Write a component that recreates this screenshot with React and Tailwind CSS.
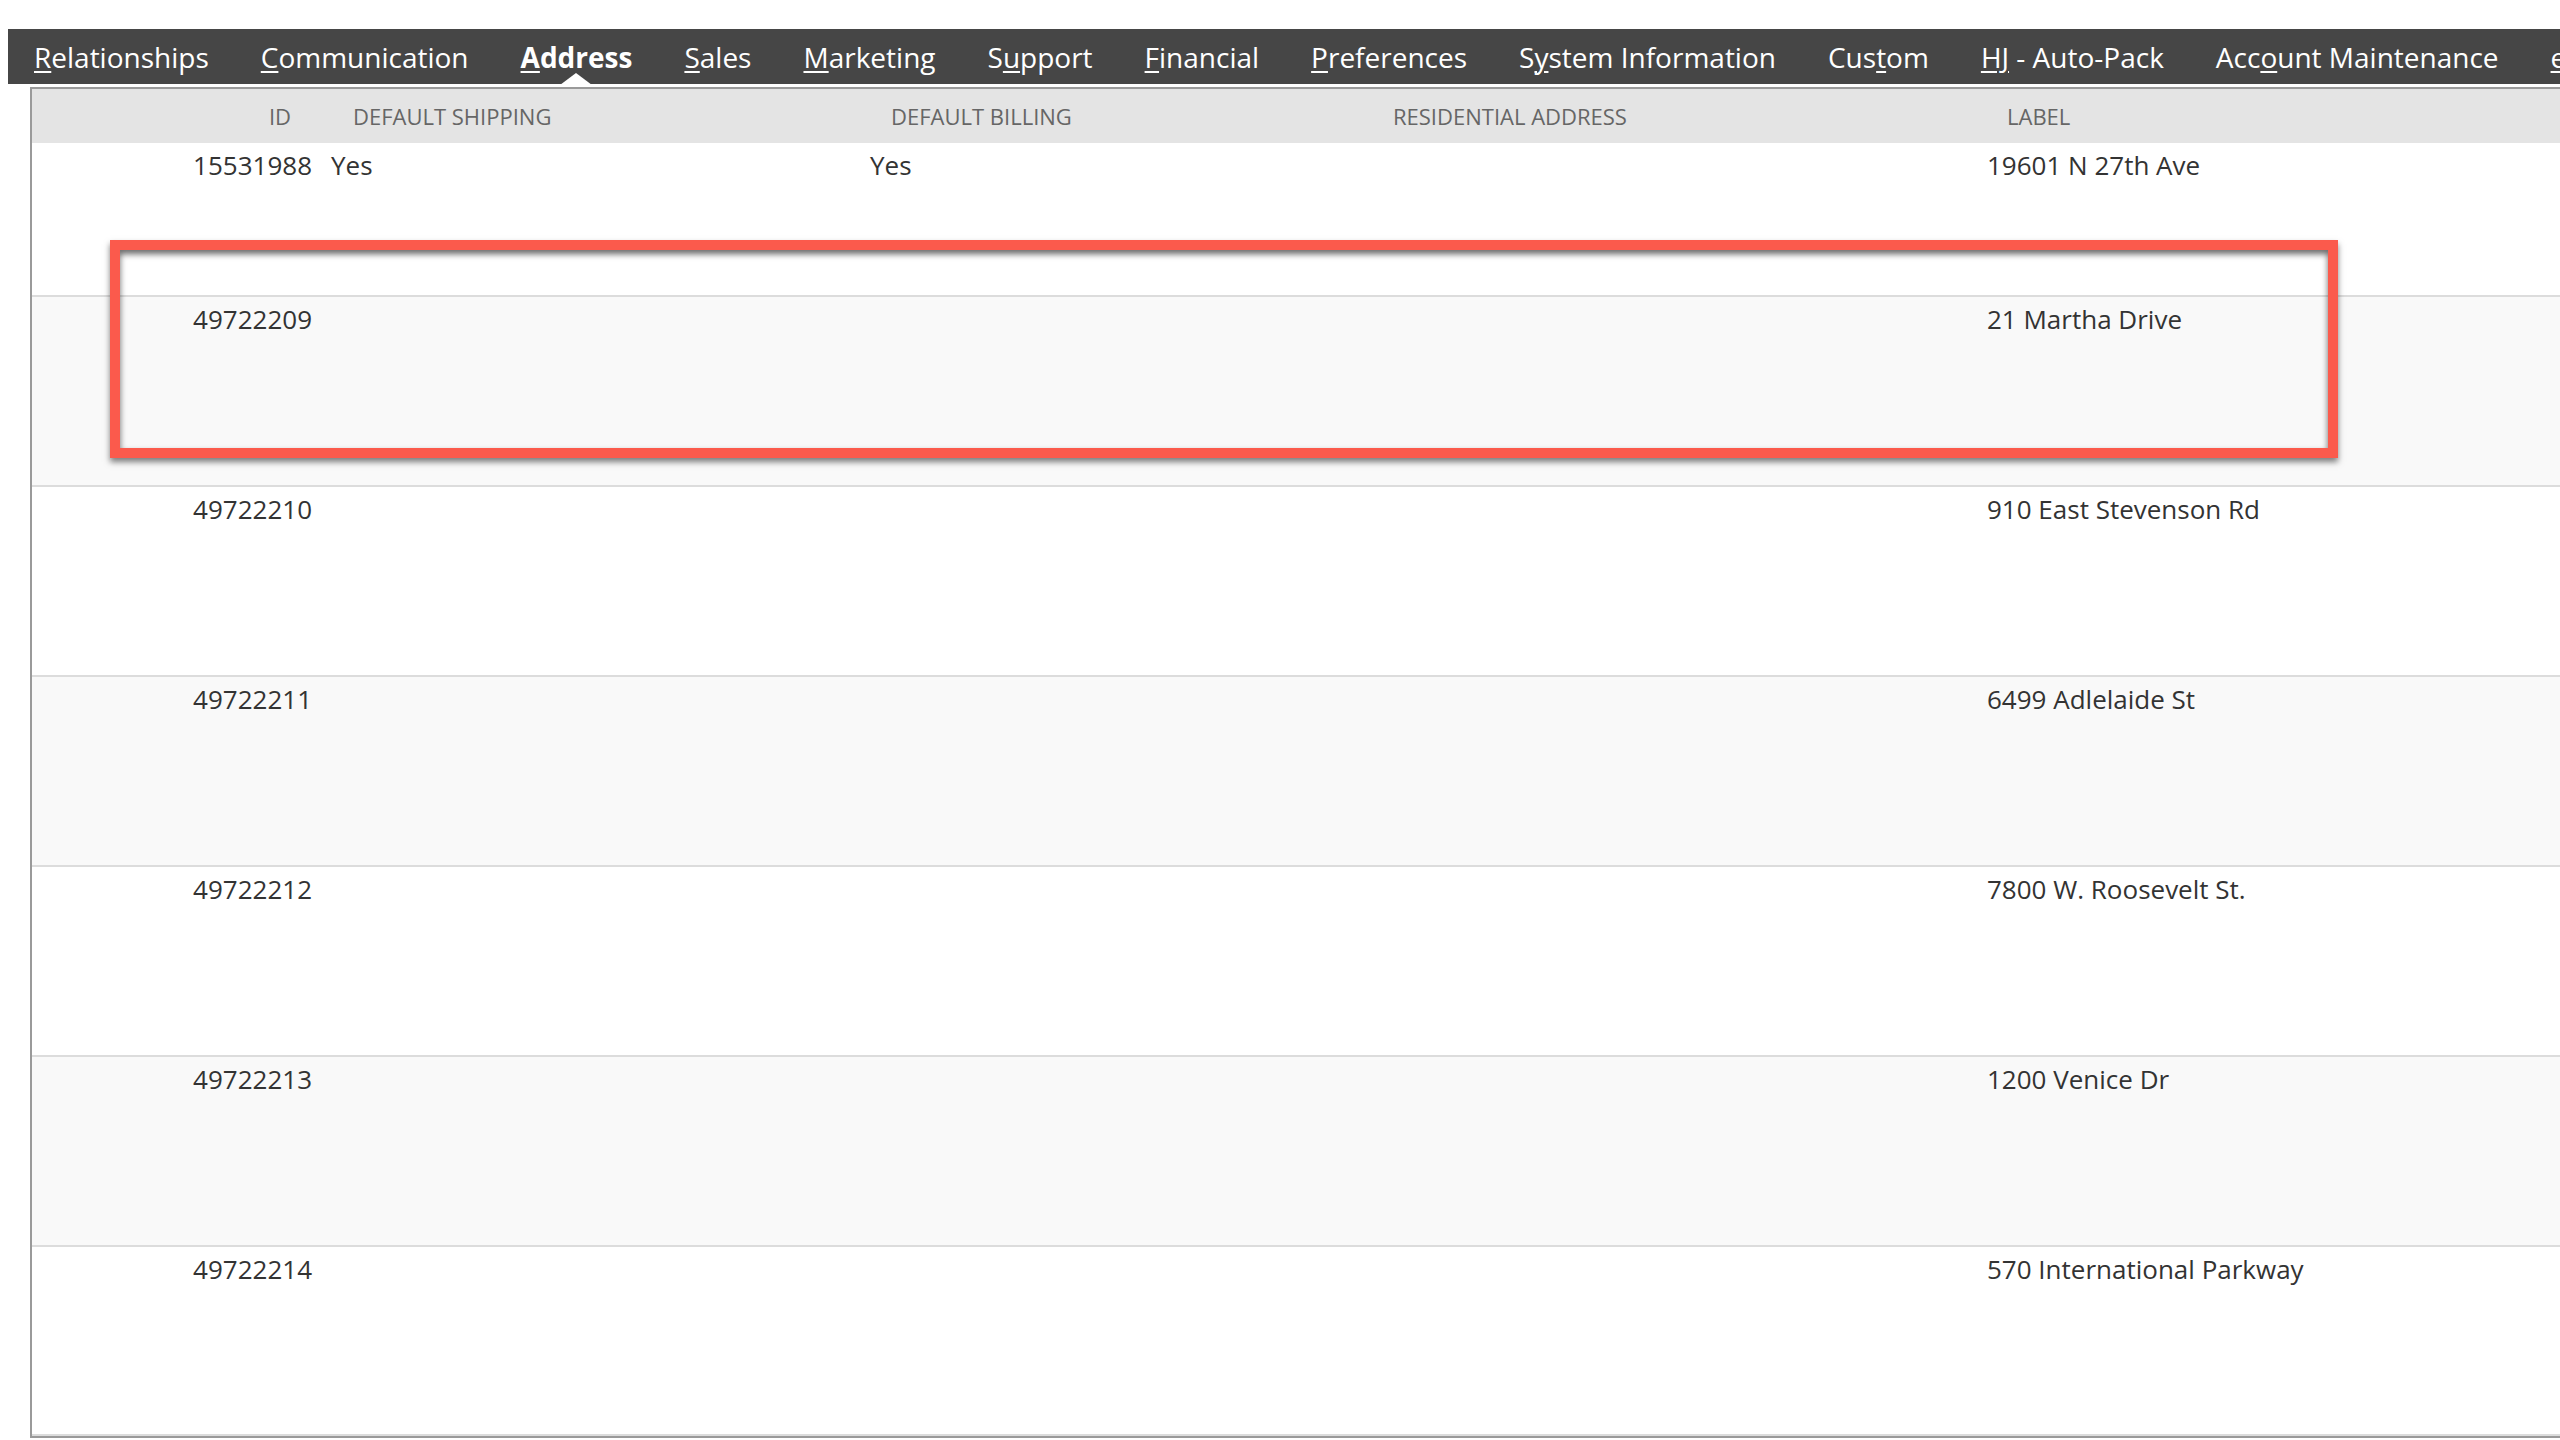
import React from "react";

const navItems = [
  { pre: "", u: "R", post: "elationships" },
  { pre: "", u: "C", post: "ommunication" },
  { pre: "", u: "A", post: "ddress", active: true },
  { pre: "", u: "S", post: "ales" },
  { pre: "", u: "M", post: "arketing" },
  { pre: "S", u: "u", post: "pport" },
  { pre: "", u: "F", post: "inancial" },
  { pre: "", u: "P", post: "references" },
  { pre: "S", u: "y", post: "stem Information" },
  { pre: "Cus", u: "t", post: "om" },
  { pre: "", u: "HJ", post: " - Auto-Pack" },
  { pre: "Acc", u: "o", post: "unt Maintenance" },
  { pre: "", u: "e", post: "Commerce" },
];

const rows = [
  { id: "15531988", ship: "Yes", bill: "Yes", res: "", label: "19601 N 27th Ave", h: "h-[154px]" },
  { id: "49722209", ship: "", bill: "", res: "", label: "21 Martha Drive", h: "h-[190px]" },
  { id: "49722210", ship: "", bill: "", res: "", label: "910 East Stevenson Rd", h: "h-[190px]" },
  { id: "49722211", ship: "", bill: "", res: "", label: "6499 Adlelaide St", h: "h-[190px]" },
  { id: "49722212", ship: "", bill: "", res: "", label: "7800 W. Roosevelt St.", h: "h-[190px]" },
  { id: "49722213", ship: "", bill: "", res: "", label: "1200 Venice Dr", h: "h-[190px]" },
  { id: "49722214", ship: "", bill: "", res: "", label: "570 International Parkway", h: "h-[189px]" },
];

export default function App() {
  return (
    <div
      className="relative w-[2560px] h-[1440px] overflow-hidden bg-white pt-[29px]"
      style={{ fontFamily: '"Open Sans", "Noto Sans", sans-serif' }}
    >
      {/* Nav bar */}
      <div className="ml-[8px] h-[55px] bg-[#464646] flex items-stretch whitespace-nowrap overflow-hidden">
        {navItems.map((it, i) => (
          <div
            key={i}
            className={`relative flex items-center px-[26px] text-[28px] text-white ${
              it.active ? "font-bold" : "font-normal"
            }`}
          >
            <span>
              {it.pre}
              <span className="underline decoration-[2px] underline-offset-[3px]">{it.u}</span>
              {it.post}
            </span>
            {it.active && (
              <span className="absolute bottom-[-1px] left-1/2 -translate-x-1/2 w-0 h-0 border-l-[16px] border-r-[16px] border-b-[12px] border-l-transparent border-r-transparent border-b-white" />
            )}
          </div>
        ))}
      </div>

      {/* Table */}
      <div className="mt-[3px] ml-[30px] w-[2560px] border-l-2 border-t-2 border-b-2 border-[#9a9a9a]">
        <div className="grid grid-cols-[290px_538px_502px_615px_1fr] h-[54px] bg-[#e4e4e4] items-center text-[22px] text-[#666666] uppercase">
          <div className="text-right pr-[31px]">ID</div>
          <div className="pl-[31px]">Default Shipping</div>
          <div className="pl-[31px]">Default Billing</div>
          <div className="pl-[31px]">Residential Address</div>
          <div className="pl-[30px]">Label</div>
        </div>
        {rows.map((r, i) => (
          <div
            key={r.id}
            className={`grid grid-cols-[290px_538px_502px_615px_1fr] items-start pt-[3px] text-[26px] text-[#333333] border-b-2 border-[#dcdcdc] ${r.h} ${
              i % 2 === 1 ? "bg-[#f9f9f9]" : "bg-white"
            }`}
          >
            <div className="text-right pr-[10px]">{r.id}</div>
            <div className="pl-[9px]">{r.ship}</div>
            <div className="pl-[10px]">{r.bill}</div>
            <div className="pl-[10px]">{r.res}</div>
            <div className="pl-[10px]">{r.label}</div>
          </div>
        ))}
      </div>

      {/* Red highlight annotation */}
      <div className="absolute left-[110px] top-[240px] w-[2228px] h-[218px] border-[10px] border-[#fb5a4c] shadow-[0_4px_6px_rgba(0,0,0,0.5),inset_0_4px_6px_rgba(0,0,0,0.6)]" />
    </div>
  );
}
